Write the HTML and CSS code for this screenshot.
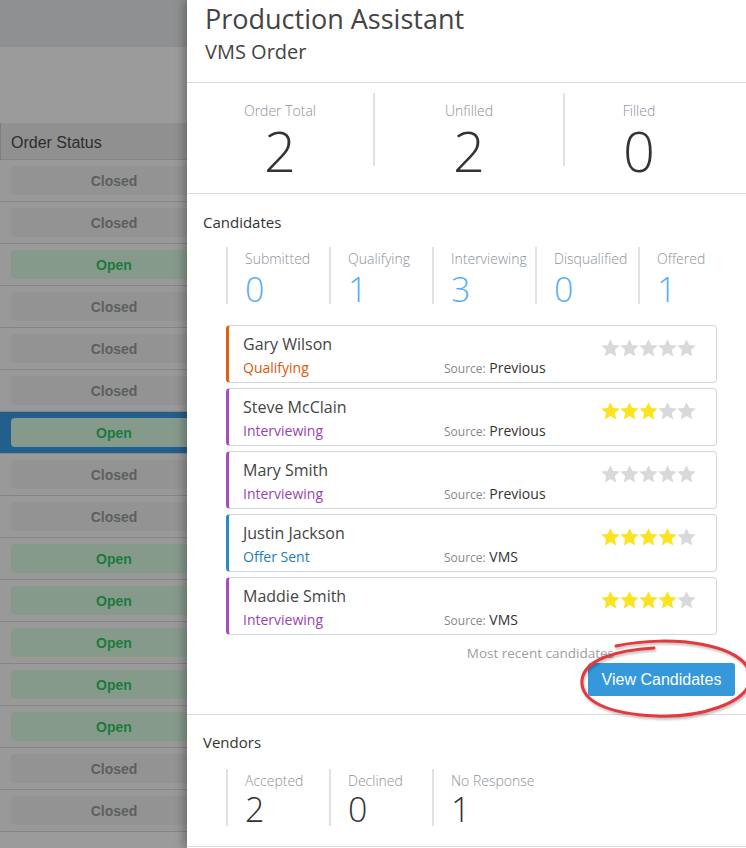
FILE: index.html
```html
<!DOCTYPE html>
<html>

<head>
  <title>Production Assistant</title>
  <meta charset="utf-8">
  <link rel="stylesheet" href="styles.css">
</head>

<body>
  <div class="page">
    <div class="backdrop">
      <div class="bar-top"></div>
      <div class="bar-filter"></div>
      <div class="th">Order Status</div>
      <div class="row"><span class="pill">Closed</span></div>
      <div class="row"><span class="pill">Closed</span></div>
      <div class="row"><span class="pill open">Open</span></div>
      <div class="row"><span class="pill">Closed</span></div>
      <div class="row"><span class="pill">Closed</span></div>
      <div class="row"><span class="pill">Closed</span></div>
      <div class="row selected"><span class="pill open">Open</span></div>
      <div class="row"><span class="pill">Closed</span></div>
      <div class="row"><span class="pill">Closed</span></div>
      <div class="row"><span class="pill open">Open</span></div>
      <div class="row"><span class="pill open">Open</span></div>
      <div class="row"><span class="pill open">Open</span></div>
      <div class="row"><span class="pill open">Open</span></div>
      <div class="row"><span class="pill open">Open</span></div>
      <div class="row"><span class="pill">Closed</span></div>
      <div class="row"><span class="pill">Closed</span></div>
    </div>

    <div class="panel">
      <div class="head">
        <h1>Production Assistant</h1>
        <h2>VMS Order</h2>
      </div>

      <div class="totals">
        <div class="total first">
          <div class="label">Order Total</div>
          <div class="big">2</div>
        </div>
        <div class="total second">
          <div class="label">Unfilled</div>
          <div class="big">2</div>
        </div>
        <div class="total third">
          <div class="label">Filled</div>
          <div class="big">0</div>
        </div>
      </div>

      <div class="section">
        <h3>Candidates</h3>
        <div class="counts">
          <div class="count"><div class="label">Submitted</div><div class="num blue">0</div></div>
          <div class="count"><div class="label">Qualifying</div><div class="num blue">1</div></div>
          <div class="count"><div class="label">Interviewing</div><div class="num blue">3</div></div>
          <div class="count"><div class="label">Disqualified</div><div class="num blue">0</div></div>
          <div class="count"><div class="label">Offered</div><div class="num blue">1</div></div>
        </div>

        <div class="cards" id="cards"></div>

        <div class="recent">Most recent candidates</div>
        <div class="actions">
          <button class="btn">View Candidates</button>
        </div>
      </div>

      <div class="section vendors">
        <h3>Vendors</h3>
        <div class="counts">
          <div class="count"><div class="label">Accepted</div><div class="num">2</div></div>
          <div class="count"><div class="label">Declined</div><div class="num">0</div></div>
          <div class="count"><div class="label">No Response</div><div class="num">1</div></div>
        </div>
      </div>

      <svg class="circle" width="180" height="84" viewBox="0 0 180 84">
        <path d="M40 8 C 95 -4, 172 6, 174 38 C 176 66, 120 80, 80 78 C 30 76, 4 62, 6 42 C 8 22, 40 12, 78 10"
          fill="none" stroke="#e5383c" stroke-width="3" stroke-linecap="round" />
      </svg>
    </div>
  </div>

  <script type="text/javascript">
  var people = [
    ['Gary Wilson', 'Qualifying', 'qual', 'Previous', 0],
    ['Steve McClain', 'Interviewing', 'intv', 'Previous', 3],
    ['Mary Smith', 'Interviewing', 'intv', 'Previous', 0],
    ['Justin Jackson', 'Offer Sent', 'offer', 'VMS', 4],
    ['Maddie Smith', 'Interviewing', 'intv', 'VMS', 4]
  ];
  var star = '<svg width="19" height="18" viewBox="0 0 24 23"><polygon points="12,0.3 15.5,7.6 23.7,8.4 17.6,14 19.3,22.3 12,18 4.7,22.3 6.4,14 0.3,8.4 8.5,7.6" /></svg>';
  var html = '';
  for (var i = 0; i < people.length; i++) {
    var p = people[i];
    var stars = '';
    for (var s = 0; s < 5; s++) {
      stars += '<span class="star' + (s < p[4] ? ' on' : '') + '">' + star + '</span>';
    }
    html += '<div class="card ' + p[2] + '">' +
      '<div class="who"><div class="name">' + p[0] + '</div><div class="status">' + p[1] + '</div></div>' +
      '<div class="source"><span>Source:</span> ' + p[3] + '</div>' +
      '<div class="stars">' + stars + '</div></div>';
  }
  document.getElementById('cards').innerHTML = html;
  </script>
</body>

</html>
```

FILE: styles.css
```css
* {
  padding: 0;
  margin: 0;
  box-sizing: border-box;
}

body {
  font-family: "Open Sans", "Liberation Sans", sans-serif;
  color: #333;
  overflow: hidden;
}

.page {
  display: flex;
  height: 848px;
}

/* dimmed list behind the panel */
.backdrop {
  width: 187px;
  flex-shrink: 0;
  background: #9b9b9b;
  font-family: "Liberation Sans", Arial, sans-serif;
  overflow: hidden;
}

.bar-top {
  height: 47px;
  background: #8f9091;
}

.bar-filter {
  height: 76px;
}

.th {
  height: 37px;
  background: #909090;
  border-left: 1px solid #7d7d7d;
  border-bottom: 1px solid #858585;
  padding: 11px 10px 0;
  font-size: 16px;
  color: #2c2c30;
}

.row {
  height: 42px;
  border-bottom: 1px solid #858585;
  padding: 6px 0 6px 11px;
  background: #999;
}

.row.selected {
  background: #235f8c;
}

.pill {
  display: block;
  height: 29px;
  margin-right: -10px;
  border-radius: 4px;
  background: #939393;
  color: #5b5f61;
  font-weight: bold;
  font-size: 14px;
  text-align: center;
  line-height: 30px;
  padding-left: 20px;
}

.pill.open {
  background: #869a8c;
  color: #1c7a3c;
}

.panel {
  flex: 1;
  background: #fff;
  position: relative;
  box-shadow: -4px 0 8px rgba(0, 0, 0, 0.25);
}

.head {
  height: 83px;
  padding: 0 18px;
  border-bottom: 1px solid #ddd;
}

h1 {
  font-size: 27px;
  font-weight: normal;
  color: #444;
  line-height: 38px;
}

h2 {
  font-size: 20px;
  font-weight: normal;
  color: #444;
  line-height: 28px;
}

.totals {
  display: flex;
  height: 111px;
  padding: 10px 0 27px;
  border-bottom: 1px solid #ddd;
}

.total {
  text-align: center;
  border-left: 2px solid #e2e2e2;
  padding-top: 8px;
}

.total.first {
  width: 186px;
  border-left: 0;
}

.total.second {
  width: 190px;
}

.total.third {
  width: 150px;
}

.label {
  font-size: 14px;
  font-weight: 300;
  color: #8a9199;
  line-height: 18px;
  padding-top: 1px;
}

.big {
  font-size: 56px;
  font-weight: 300;
  color: #333;
  line-height: 56px;
  margin-top: 2px;
}

.section {
  padding: 17px 0 0 16px;
  border-bottom: 1px solid #ddd;
}

h3 {
  font-size: 15px;
  font-weight: normal;
  color: #333;
  line-height: 22px;
}

.counts {
  display: flex;
  margin: 14px 0 0 23px;
}

.count {
  width: 103px;
  height: 57px;
  border-left: 2px solid #e2e2e2;
  padding: 2px 0 0 17px;
}

.num {
  font-size: 34px;
  font-weight: 300;
  line-height: 38px;
  margin-top: 2px;
  color: #333;
}

.num.blue {
  color: #5aaef0;
}

.cards {
  margin: 21px 0 0 23px;
  width: 491px;
}

.card {
  display: flex;
  height: 58px;
  margin-bottom: 5px;
  border: 1px solid #d2d7de;
  border-left: 3px solid #999;
  border-radius: 4px;
  padding: 7px 0 0 14px;
}

.who {
  width: 201px;
}

.name {
  font-size: 16px;
  color: #444;
  line-height: 22px;
}

.status {
  font-size: 14px;
  line-height: 26px;
}

.card.qual {
  border-left-color: #e0600c;
}

.card.qual .status {
  color: #e0560a;
}

.card.intv {
  border-left-color: #a34fc2;
}

.card.intv .status {
  color: #9a3fb8;
}

.card.offer {
  border-left-color: #2a8ac8;
}

.card.offer .status {
  color: #1d7cc0;
}

.source {
  width: 157px;
  padding-top: 27px;
  font-size: 14px;
  line-height: 16px;
  color: #333;
}

.source span {
  font-size: 12px;
  color: #888;
}

.stars {
  display: flex;
  padding-top: 6px;
}

.star svg {
  display: block;
  fill: #d9d9d9;
}

.star.on svg {
  fill: #fbe320;
}

.recent {
  margin-top: 9px;
  text-align: right;
  font-size: 13.5px;
  color: #9a9fa5;
  line-height: 18px;
  padding-right: 132px;
}

.actions {
  display: flex;
  justify-content: flex-end;
  padding: 1px 11px 18px 0;
}

.btn {
  width: 147px;
  height: 33px;
  border: 0;
  border-radius: 3px;
  background: #3498db;
  color: #fff;
  font-family: "Liberation Sans", Arial, sans-serif;
  font-size: 16px;
}

.vendors {
  padding-top: 16px;
  height: 132px;
}

.vendors .counts {
  margin-top: 16px;
}

.vendors .num {
  margin-top: 0;
}

.circle {
  position: absolute;
  left: 389px;
  top: 638px;
  filter: drop-shadow(1px 2px 1px rgba(0, 0, 0, 0.25));
}
```
